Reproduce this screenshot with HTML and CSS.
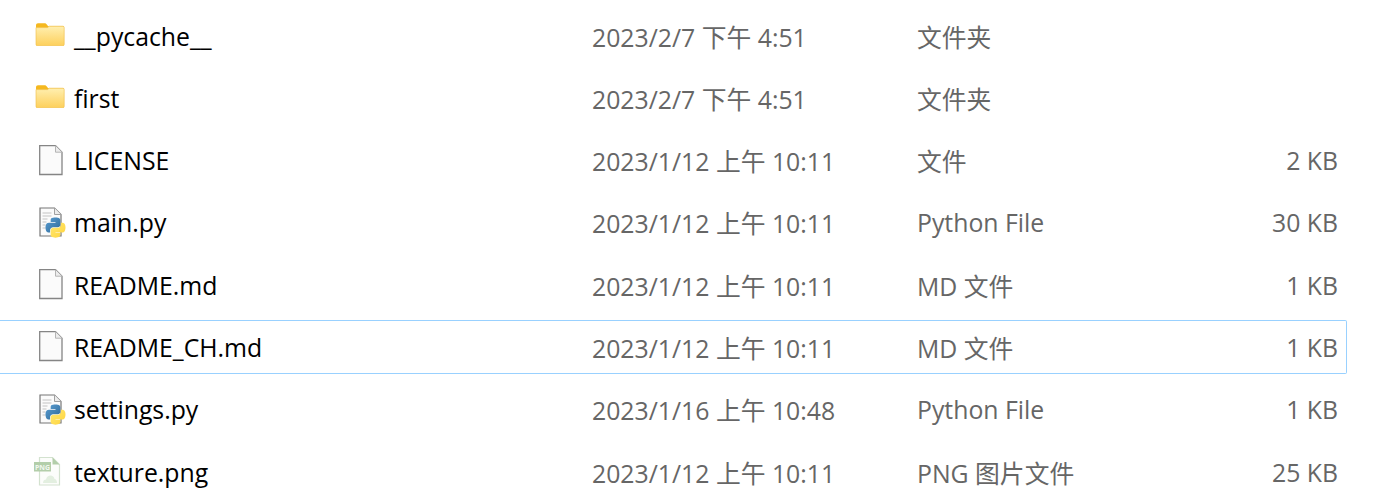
FILE: index.html
```html
<!DOCTYPE html>
<html lang="en">
<head>
    <meta charset="UTF-8">
    <meta name="viewport" content="width=device-width, initial-scale=1.0">
    <title>Files</title>
    <link rel="stylesheet" href="styles.css">
</head>
<body>
    <svg class="defs" width="0" height="0">
        <defs>
            <linearGradient id="folder-fill" x1="0" y1="0" x2="0" y2="1">
                <stop offset="0" stop-color="#ffefb0"/>
                <stop offset="1" stop-color="#fdd05c"/>
            </linearGradient>
            <linearGradient id="py-blue" x1="0" y1="0" x2="1" y2="1">
                <stop offset="0" stop-color="#5a9fd4"/>
                <stop offset="1" stop-color="#306998"/>
            </linearGradient>
            <linearGradient id="py-yellow" x1="0" y1="0" x2="1" y2="1">
                <stop offset="0" stop-color="#ffe873"/>
                <stop offset="1" stop-color="#ffd43b"/>
            </linearGradient>
            <symbol id="icon-folder" viewBox="0 0 30 24">
                <path d="M1 3.500C1 2 1.800 1.200 3 1.200h6.500c1 0 1.600.4 2.300 1.200l1.400 1.800H29v2H1z" fill="#f5b81f"/>
                <path d="M1 5.600h11.500l1.800-1.400H28c.7 0 1.200.5 1.200 1.200v17c0 .8-.5 1.300-1.200 1.300H2.200c-.7 0-1.200-.5-1.200-1.300z" fill="url(#folder-fill)" stroke="#f0bc45" stroke-width=".6"/>
            </symbol>
            <symbol id="icon-file" viewBox="0 0 24 32">
                <path d="M.7 .7h15.800L23 7.200V29.500H.7z" fill="#fbfbfb" stroke="#858585" stroke-width="1.300"/>
                <path d="M16.500 .7v6.500H23" fill="#ececec" stroke="#b4b4b4" stroke-width="1"/>
            </symbol>
            <symbol id="icon-python" viewBox="0 0 28 32">
                <path d="M1 1h14.500L22 7.500V29H1z" fill="#fbfbfb" stroke="#777" stroke-width="1.200"/>
                <path d="M15.500 1v6.500H22" fill="#ececec" stroke="#a0a0a0" stroke-width="1"/>
                <path d="M3.500 6h9M3.500 9h9M3.500 12h5M3.500 15h4M3.500 18h3M3.500 21h3" stroke="#c4c4c4" stroke-width="1.200"/>
                <g transform="translate(6.500 10.500) scale(.18)">
                    <path d="M54.919 0.001c-4.584.022-8.961.413-12.813 1.095C30.760 3.099 28.700 7.295 28.700 15.032v10.219h26.813v3.406H18.638c-7.793 0-14.616 4.684-16.750 13.594-2.462 10.213-2.571 16.586 0 27.250 1.906 7.938 6.457 13.594 14.250 13.594h9.219v-12.250c0-8.850 7.657-16.656 16.750-16.656h26.781c7.455 0 13.406-6.138 13.406-13.625V15.032c0-7.266-6.130-12.725-13.406-13.937C64.282.328 59.502-.020 54.919.001z" fill="url(#py-blue)"/>
                    <path d="M85.638 28.657v11.906c0 9.231-7.826 17-16.750 17H42.106c-7.336 0-13.406 6.278-13.406 13.625v25.531c0 7.266 6.319 11.540 13.406 13.625 8.487 2.496 16.626 2.947 26.781 0 6.750-1.954 13.406-5.888 13.406-13.625V86.500H55.513v-3.406h40.156c7.793 0 10.696-5.436 13.406-13.594 2.799-8.399 2.680-16.476 0-27.250-1.926-7.757-5.604-13.594-13.406-13.594z" fill="url(#py-yellow)"/>
                </g>
            </symbol>
            <symbol id="icon-png" viewBox="0 0 28 32">
                <path d="M5.500 1.500h13l7 7V29H5.500z" fill="#fcfdfb" stroke="#d3e2cf" stroke-width="1.200"/>
                <path d="M18.500 1.500v7h7z" fill="#b3ceaa"/>
                <rect x="0" y="6" width="17" height="9.500" fill="#b3ceaa"/>
                <text x="8.500" y="13.500" class="png-tag">PNG</text>
                <path d="M9 27c0-2.500 1.500-3.500 3-3.500.5-2.500 2.500-4 4.500-4s3.700 1.500 4 3.500c1.500.2 2.500 1.500 2.500 4z" fill="#e3efe0"/>
            </symbol>
        </defs>
    </svg>

    <div class="list">
        <div class="row">
            <svg class="icon folder"><use href="#icon-folder"/></svg>
            <span class="name">__pycache__</span>
            <span class="date">2023/2/7 下午 4:51</span>
            <span class="type">文件夹</span>
            <span class="size"></span>
        </div>
        <div class="row">
            <svg class="icon folder"><use href="#icon-folder"/></svg>
            <span class="name">first</span>
            <span class="date">2023/2/7 下午 4:51</span>
            <span class="type">文件夹</span>
            <span class="size"></span>
        </div>
        <div class="row">
            <svg class="icon file"><use href="#icon-file"/></svg>
            <span class="name">LICENSE</span>
            <span class="date">2023/1/12 上午 10:11</span>
            <span class="type">文件</span>
            <span class="size">2 KB</span>
        </div>
        <div class="row">
            <svg class="icon wide"><use href="#icon-python"/></svg>
            <span class="name">main.py</span>
            <span class="date">2023/1/12 上午 10:11</span>
            <span class="type">Python File</span>
            <span class="size">30 KB</span>
        </div>
        <div class="row">
            <svg class="icon file"><use href="#icon-file"/></svg>
            <span class="name">README.md</span>
            <span class="date">2023/1/12 上午 10:11</span>
            <span class="type">MD 文件</span>
            <span class="size">1 KB</span>
        </div>
        <div class="row selected">
            <svg class="icon file"><use href="#icon-file"/></svg>
            <span class="name">README_CH.md</span>
            <span class="date">2023/1/12 上午 10:11</span>
            <span class="type">MD 文件</span>
            <span class="size">1 KB</span>
        </div>
        <div class="row">
            <svg class="icon wide"><use href="#icon-python"/></svg>
            <span class="name">settings.py</span>
            <span class="date">2023/1/16 上午 10:48</span>
            <span class="type">Python File</span>
            <span class="size">1 KB</span>
        </div>
        <div class="row">
            <svg class="icon png"><use href="#icon-png"/></svg>
            <span class="name">texture.png</span>
            <span class="date">2023/1/12 上午 10:11</span>
            <span class="type">PNG 图片文件</span>
            <span class="size">25 KB</span>
        </div>
    </div>
</body>
</html>
```

FILE: styles.css
```css
html, body {
  margin:0;
  height:492px;
  overflow:hidden;
  background:#fff;
}
body {
  font-family:"Open Sans","Noto Sans CJK SC",sans-serif;
  font-size:24.8px;
}
.defs {
  display:block;
  height:0;
}
.list {
  display:flex;
  flex-direction:column;
  gap:8.3px;
  width:1347px;
  padding-top:9px;
}
.row {
  height:54px;
  box-sizing:border-box;
  display:grid;
  grid-template-columns:74px 518px 325px 200px 1fr;
  align-items:center;
  padding-right:8px;
  border:1px solid transparent;
  border-left:none;
}
.row.selected {
  border-color:#99d1ff;
  border-radius:0 2px 2px 0;
}
.row span {
  margin-bottom:1px;
}
.icon {
  width:30px;
  height:32px;
  margin-left:35px;
}
.folder {
  height:24px;
  margin-top:-5px;
}
.file {
  width:24px;
  margin-left:39px;
}
.wide {
  width:28px;
  margin-left:39px;
}
.png {
  width:28px;
  margin-left:34px;
}
.png-tag {
  font-family:"Open Sans",sans-serif;
  font-size:7px;
  font-weight:700;
  text-anchor:middle;
  fill:#f1f7ef;
}
.name {
  color:#000;
}
.date, .type, .size {
  color:#666;
}
.size {
  text-align:right;
}
```
